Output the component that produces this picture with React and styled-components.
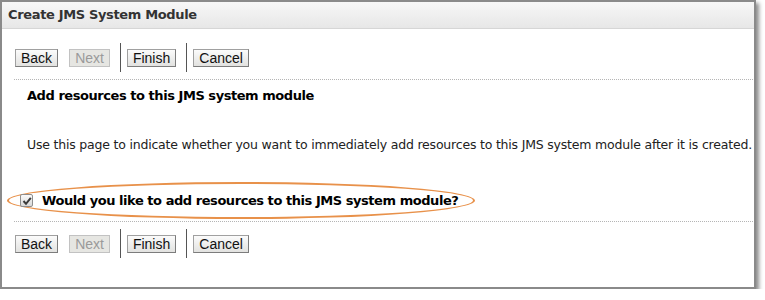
import React from 'react'
import styled, { createGlobalStyle } from 'styled-components'

const GlobalStyle = createGlobalStyle`
    body {
        margin: 0;
        background: #ffffff;
    }
`;

function Toolbar({ top }) {
    return (
        <ToolbarRow $top={top}>
            <Button>Back</Button>
            <Button disabled>Next</Button>
            <Divider />
            <Button>Finish</Button>
            <Divider />
            <Button>Cancel</Button>
        </ToolbarRow>
    )
}

function App() {
    return (
        <>
            <GlobalStyle />
            <Frame>
                <Header>Create JMS System Module</Header>

                <Toolbar top={14} />
                <Rule />

                <Section>
                    <h3>Add resources to this JMS system module</h3>
                    <p>Use this page to indicate whether you want to immediately add resources to this JMS system module after it is created.</p>
                </Section>

                <Highlight>
                    <CheckBox>
                        <svg width="10" height="10" viewBox="0 0 10 10">
                            <path d="M1.5 5 L4 7.8 L8.8 1.8" fill="none" stroke="#3a3a3a" strokeWidth="2" />
                        </svg>
                    </CheckBox>
                    <label>Would you like to add resources to this JMS system module?</label>
                </Highlight>

                <Rule />
                <Toolbar top={7} />
            </Frame>
        </>
    )
}

const Frame = styled.div`
    box-sizing: border-box;
    width: 756px;
    height: 289px;
    border: 2px solid #8a8a8a;
    box-shadow: 3px 3px 4px rgba(0, 0, 0, 0.45);
    background: #ffffff;
    font-family: "DejaVu Sans", sans-serif;
    color: #222;
`;

const Header = styled.div`
    height: 26px;
    line-height: 26px;
    padding-left: 6px;
    background: linear-gradient(#f7f7f7, #e7e7e7);
    border-bottom: 1px solid #d6d6d6;
    font-size: 13px;
    font-weight: bold;
    letter-spacing: -0.35px;
    color: #333;
`;

const ToolbarRow = styled.div`
    display: flex;
    align-items: center;
    height: 29px;
    margin-top: ${p => p.$top}px;
    margin-bottom: 7px;
    padding-left: 13px;
`;

const Button = styled.button`
    box-sizing: border-box;
    height: 18px;
    margin-right: 11px;
    padding: 0 5px;
    font-family: "Liberation Sans", Arial, sans-serif;
    font-size: 14px;
    line-height: 16px;
    color: #111;
    background: linear-gradient(#fbfbfb, #e2e2e0);
    border: 1px solid #a0a0a0;
    border-right-color: #7c7c7c;
    border-bottom-color: #7c7c7c;
    border-radius: 0;

    &:disabled {
        color: #9a9a9a;
        background: #e6e6e2;
        border-color: #c2c2c2;
    }
`;

const Divider = styled.span`
    width: 1px;
    height: 29px;
    background: #555;
    margin-right: 6px;
    margin-left: -1px;
`;

const Rule = styled.div`
    height: 0;
    margin-left: 12px;
    margin-right: 1px;
    border-top: 1px dotted #b5b5b5;
`;

const Section = styled.div`
    padding-left: 25px;

    h3 {
        margin: 7px 0 0;
        font-size: 13px;
        line-height: 18px;
        font-weight: bold;
        letter-spacing: -0.45px;
        color: #000;
    }

    p {
        margin: 31px 0 0;
        font-size: 12.5px;
        line-height: 18px;
        letter-spacing: -0.2px;
        white-space: nowrap;
    }
`;

const Highlight = styled.div`
    box-sizing: border-box;
    display: flex;
    align-items: center;
    gap: 9px;
    width: 468px;
    height: 37px;
    margin: 28px 0 2px 5px;
    padding-left: 11px;
    border: 2px solid #e8914a;
    border-radius: 50%;

    label {
        font-size: 13px;
        font-weight: bold;
        letter-spacing: -0.45px;
        white-space: nowrap;
        color: #000;
    }
`;

const CheckBox = styled.span`
    box-sizing: border-box;
    display: flex;
    align-items: center;
    justify-content: center;
    width: 13px;
    height: 13px;
    border: 1px solid #8e8e8e;
    border-radius: 2px;
    background: linear-gradient(#fafafa, #d8d8d8);
`;

export default App
